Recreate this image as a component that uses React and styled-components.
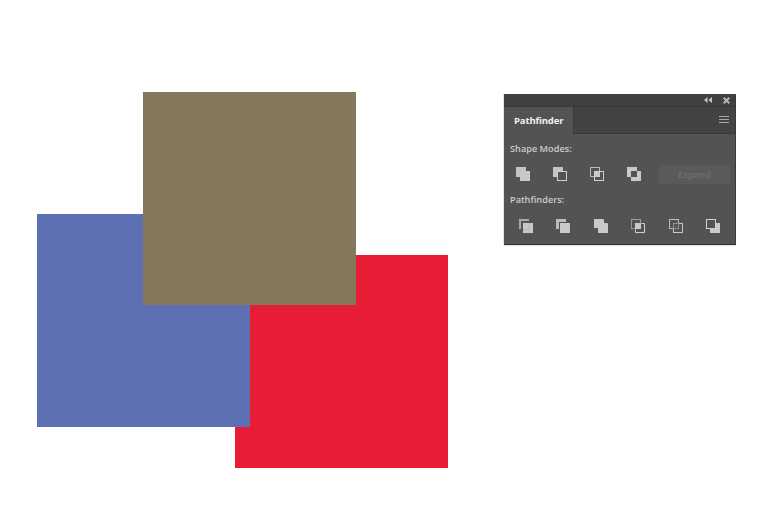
import React from "react";
import styled, { createGlobalStyle } from "styled-components";

const Global = createGlobalStyle`
  html, body { margin: 0; padding: 0; background: #fff; }
  body { font-family: "Open Sans", "Liberation Sans", sans-serif; }
`;

const Canvas = styled.div`
  position: relative;
  width: 759px;
  height: 507px;
  overflow: hidden;
  background: #fff;
`;

const Square = styled.div`
  position: absolute;
  left: ${p => p.$x}px;
  top: ${p => p.$y}px;
  width: ${p => p.$w}px;
  height: ${p => p.$h}px;
  background: ${p => p.$c};
`;

const Panel = styled.section`
  position: absolute;
  left: 504px;
  top: 94px;
  width: 232px;
  height: 151px;
  display: flex;
  flex-direction: column;
  background: #535353;
  box-shadow: inset 0 -1px 0 #2f2f2f, -1px 0 0 #e4e4e4, 0 1px 0 #e6e6e6;
  border-right: 1px solid #3a3a3a;
  box-sizing: border-box;
`;

const TitleBar = styled.header`
  height: 12px;
  background: #404040;
  border-bottom: 1px solid #383838;
  display: flex;
  align-items: center;
  justify-content: flex-end;
  gap: 11px;
  padding-right: 5px;
`;

const TabRow = styled.div`
  height: 26px;
  background: #434343;
  border-bottom: 1px solid #393939;
  display: flex;
  align-items: stretch;
  justify-content: space-between;
`;

const Tab = styled.div`
  width: 70px;
  margin-bottom: -1px;
  background: #535353;
  border-right: 1px solid #393939;
  box-sizing: border-box;
  display: flex;
  align-items: center;
  padding-left: 10px;
  color: #f2f2f2;
  font-size: 9.5px;
  font-weight: 700;
  letter-spacing: -0.15px;
`;

const MenuButton = styled.div`
  display: flex;
  align-items: center;
  padding-right: 5px;
`;

const Body = styled.div`
  display: flex;
  flex-direction: column;
  padding: 9px 0 0 6px;
`;

const Label = styled.div`
  height: 12px;
  line-height: 12px;
  font-size: 9.2px;
  font-weight: 600;
  color: #c8cdd2;
`;

const Row = styled.div`
  display: flex;
  align-items: center;
  height: 30px;
  margin-top: ${p => p.$mt}px;
  margin-bottom: ${p => p.$mb}px;
  padding-left: ${p => p.$pl}px;
  gap: ${p => p.$gap}px;
`;

const Glyph = styled.svg`
  width: 16px;
  height: 16px;
  flex: none;
  display: block;
`;

const ExpandButton = styled.div`
  width: 71px;
  height: 19px;
  margin-left: -4px;
  background: #5a5a5a;
  color: #6f6f6f;
  font-size: 9.2px;
  font-weight: 600;
  display: flex;
  align-items: center;
  justify-content: center;
`;

const BG = "#535353";
const F = "#c9c9c9";
const L = "#d0d0d0";

const Filled = ({ x, y, s = 10, c = F }) => <rect x={x} y={y} width={s} height={s} fill={c} />;
const Outline = ({ x, y, s = 10, c = L }) => (
  <rect x={x + 0.5} y={y + 0.5} width={s - 1} height={s - 1} fill="none" stroke={c} />
);

const icons = {
  unite: (<><Filled x={1} y={1} c="#c4c4c4" /><Filled x={5} y={5} /></>),
  minus: (<><Filled x={1} y={1} c="#c4c4c4" /><rect x={5} y={5} width={10} height={10} fill={BG} /><Outline x={5} y={5} /></>),
  intersect: (<><Outline x={1} y={1} c="#bdbdbd" /><Filled x={5} y={5} s={6} /><Outline x={5} y={5} /></>),
  exclude: (
    <path fillRule="evenodd" fill={F} d="M1 1h10v4h4v10H5v-4H1zM5 5v6h6V5z" />
  ),
  divide: (
    <>
      <Filled x={1} y={1} c="#a9a9a9" />
      <rect x={3} y={3} width={8} height={8} fill={BG} />
      <Filled x={5} y={5} c={F} />
      <rect x={11} y={5} width={1} height={7} fill="#b5b5b5" />
      <rect x={5} y={11} width={7} height={1} fill="#b5b5b5" />
    </>
  ),
  trim: (
    <>
      <Filled x={1} y={1} c="#bdbdbd" />
      <rect x={4} y={4} width={11} height={11} fill={BG} />
      <Filled x={5} y={5} />
    </>
  ),
  merge: (
    <>
      <path fill={F} d="M1 1h10v4h4v10H5v-5H1z" />
      <path d="M10.500 1.500l4 4" stroke={BG} strokeWidth="0.7" fill="none" />
    </>
  ),
  crop: (
    <>
      <Outline x={1} y={1} c="#9a9a9a" />
      <rect x={5} y={5} width={6} height={6} fill={F} />
      <path d="M11.500 5.500h3v9h-9v-3" fill="none" stroke={L} />
    </>
  ),
  outline: (
    <>
      <Outline x={1} y={1} c="#bdbdbd" />
      <Outline x={5} y={5} c="#c9c9c9" />
      <Outline x={5} y={5} s={6} c="#8f8f8f" />
    </>
  ),
  backMinus: (
    <>
      <Filled x={5} y={5} />
      <rect x={1} y={1} width={10} height={10} fill={BG} />
      <Outline x={1} y={1} />
    </>
  ),
};

const Icon = ({ name }) => <Glyph viewBox="0 0 16 16">{icons[name]}</Glyph>;

export default function App() {
  return (
    <Canvas>
      <Global />
      <Square $x={235} $y={255} $w={213} $h={213} $c="#e81c35" />
      <Square $x={37} $y={214} $w={213} $h={213} $c="#5d70b3" />
      <Square $x={143} $y={92} $w={213} $h={213} $c="#85785a" />
      <Panel>
        <TitleBar>
          <svg width="8" height="6" viewBox="0 0 8 6">
            <path d="M3.500 0v6L0 3zM8 0v6L4.500 3z" fill="#c4c4c4" />
          </svg>
          <svg width="7" height="7" viewBox="0 0 7 7">
            <path d="M.7.7l5.600 5.600M6.300.7L.7 6.300" stroke="#b5b5b5" strokeWidth="2" />
          </svg>
        </TitleBar>
        <TabRow>
          <Tab>Pathfinder</Tab>
          <MenuButton>
            <svg width="12" height="10" viewBox="0 0 12 10">
              <path d="M1 1.500h10M1 4.500h10M1 7.500h10" stroke="#a8a8a8" />
            </svg>
          </MenuButton>
        </TabRow>
        <Body>
          <Label>Shape Modes:</Label>
          <Row $mt={4} $mb={5} $pl={5} $gap={21}>
            <Icon name="unite" />
            <Icon name="minus" />
            <Icon name="intersect" />
            <Icon name="exclude" />
            <ExpandButton>Expand</ExpandButton>
          </Row>
          <Label>Pathfinders:</Label>
          <Row $mt={5} $mb={0} $pl={8} $gap={21.4}>
            <Icon name="divide" />
            <Icon name="trim" />
            <Icon name="merge" />
            <Icon name="crop" />
            <Icon name="outline" />
            <Icon name="backMinus" />
          </Row>
        </Body>
      </Panel>
    </Canvas>
  );
}
